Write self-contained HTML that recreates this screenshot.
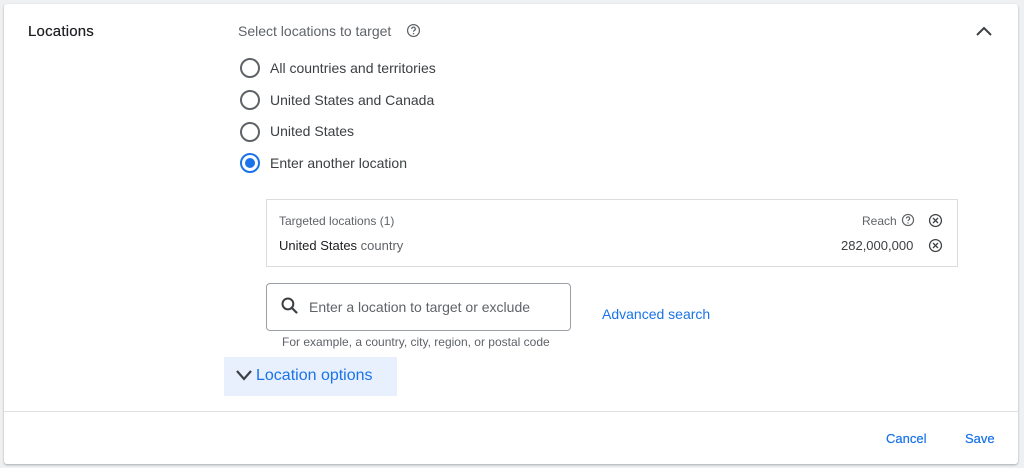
<!DOCTYPE html>
<html><head><style>
body{margin:0;width:1024px;height:468px;background:#eef0f2;font-family:"Liberation Sans",Arial,sans-serif;position:relative;overflow:hidden}
.card{position:absolute;left:4px;top:4px;width:1014px;height:460px;background:#fff;border-radius:3px;box-shadow:0 1px 2px rgba(0,0,0,.3)}
.a{position:absolute;white-space:nowrap}
.radio{position:absolute;left:240px;width:16px;height:16px;border:2px solid #5f6368;border-radius:50%}
.radio.on{border-color:#1a73e8}
.radio.on:after{content:"";position:absolute;left:3px;top:3px;width:10px;height:10px;border-radius:50%;background:#1a73e8}
.rl{position:absolute;left:270px;font-size:14px;color:#3c4043}
</style></head><body>
<div class="card"></div>
<div class="a" style="left:28px;top:23px;font-size:15px;color:#202124;text-shadow:0 0 0.4px #202124;letter-spacing:0.2px">Locations</div>
<div class="a" style="left:238px;top:23px;font-size:14px;color:#5f6368">Select locations to target</div>
<svg class="a" style="left:406px;top:23px" width="15" height="15" viewBox="0 0 24 24"><circle cx="12" cy="12" r="9.5" fill="none" stroke="#5f6368" stroke-width="2"/><path d="M9.2 9.5a2.8 2.8 0 1 1 4 2.5c-.9.5-1.2 1-1.2 2" fill="none" stroke="#5f6368" stroke-width="2"/><circle cx="12" cy="17" r="1.2" fill="#5f6368"/></svg>
<svg class="a" style="left:975px;top:24px" width="18" height="14" viewBox="0 0 18 14"><path d="M2 11L9 4l7 7" fill="none" stroke="#3c4043" stroke-width="2"/></svg>
<div class="radio" style="top:58px"></div><div class="rl" style="top:60px">All countries and territories</div>
<div class="radio" style="top:90px"></div><div class="rl" style="top:92px">United States and Canada</div>
<div class="radio" style="top:122px"></div><div class="rl" style="top:123px">United States</div>
<div class="radio on" style="top:153px"></div><div class="rl" style="top:155px">Enter another location</div>
<div class="a" style="left:266px;top:199px;width:690px;height:66px;border:1px solid #dadce0"></div>
<div class="a" style="left:279px;top:214px;font-size:12px;color:#5f6368">Targeted locations (1)</div>
<div class="a" style="left:862px;top:214px;font-size:12px;color:#5f6368">Reach</div>
<svg class="a" style="left:901px;top:213px" width="14" height="14" viewBox="0 0 24 24"><circle cx="12" cy="12" r="9.5" fill="none" stroke="#5f6368" stroke-width="2"/><path d="M9.2 9.5a2.8 2.8 0 1 1 4 2.5c-.9.5-1.2 1-1.2 2" fill="none" stroke="#5f6368" stroke-width="2"/><circle cx="12" cy="17" r="1.2" fill="#5f6368"/></svg>
<svg class="a" style="left:928px;top:213px" width="15" height="15" viewBox="0 0 24 24"><circle cx="12" cy="12" r="9.5" fill="none" stroke="#3c4043" stroke-width="2"/><path d="M8 8l8 8M16 8l-8 8" stroke="#3c4043" stroke-width="2"/></svg>
<div class="a" style="left:279px;top:238px;font-size:13px;color:#202124">United States <span style="color:#5f6368">country</span></div>
<div class="a" style="left:841px;top:238px;font-size:13px;color:#3c4043">282,000,000</div>
<svg class="a" style="left:928px;top:238px" width="15" height="15" viewBox="0 0 24 24"><circle cx="12" cy="12" r="9.5" fill="none" stroke="#3c4043" stroke-width="2"/><path d="M8 8l8 8M16 8l-8 8" stroke="#3c4043" stroke-width="2"/></svg>
<div class="a" style="left:266px;top:283px;width:303px;height:46px;border:1px solid #9aa0a6;border-radius:4px"></div>
<svg class="a" style="left:280px;top:296px" width="20" height="20" viewBox="0 0 24 24"><circle cx="9.5" cy="9.5" r="6.5" fill="none" stroke="#3c4043" stroke-width="2.4"/><path d="M14.5 14.5l6 6" stroke="#3c4043" stroke-width="2.6"/></svg>
<div class="a" style="left:309px;top:299px;font-size:14px;color:#5f6368">Enter a location to target or exclude</div>
<div class="a" style="left:602px;top:306px;font-size:14px;color:#1a73e8">Advanced search</div>
<div class="a" style="left:282px;top:335px;font-size:12px;color:#5f6368">For example, a country, city, region, or postal code</div>
<div class="a" style="left:224px;top:357px;width:173px;height:39px;background:#e8f0fe"></div>
<svg class="a" style="left:235px;top:369px" width="18" height="13" viewBox="0 0 18 13"><path d="M2 2l7 8 7-8" fill="none" stroke="#3c4043" stroke-width="2.2"/></svg>
<div class="a" style="left:256px;top:367px;font-size:16px;color:#1a73e8">Location options</div>
<div class="a" style="left:4px;top:411px;width:1014px;height:1px;background:#e0e0e0"></div>
<div class="a" style="left:886px;top:431px;font-size:13px;color:#1a73e8;text-shadow:0 0 0.5px #1a73e8">Cancel</div>
<div class="a" style="left:965px;top:431px;font-size:13px;color:#1a73e8;text-shadow:0 0 0.5px #1a73e8">Save</div>
</body></html>
